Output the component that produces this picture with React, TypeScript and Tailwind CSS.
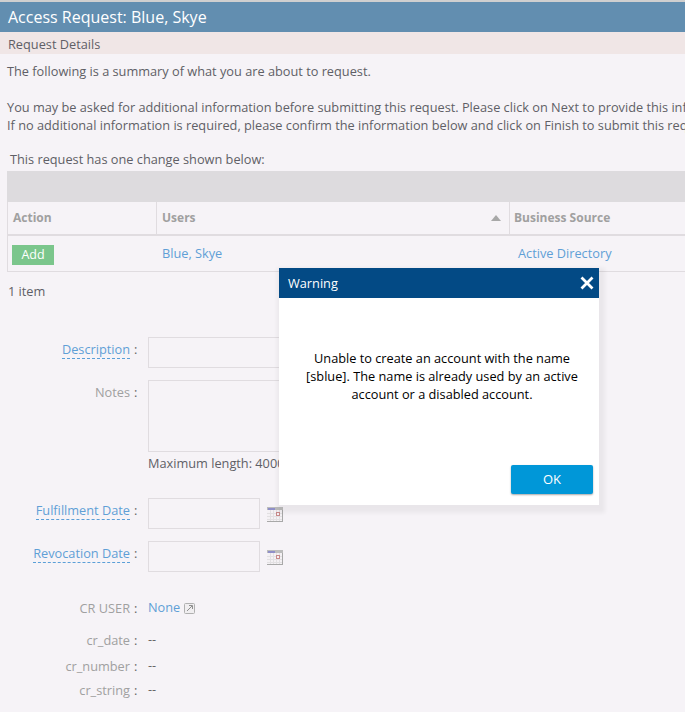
import { useState } from "react";

const font = { fontFamily: '"Open Sans", sans-serif' };

function CalendarIcon() {
  return (
    <svg width="16" height="15" viewBox="0 0 16 15" className="shrink-0" shapeRendering="crispEdges">
      <rect x="0" y="0" width="16" height="15" fill="#a8a8a8" />
      <rect x="0" y="0" width="16" height="3" fill="#bcbcbc" />
      <rect x="1" y="1" width="7" height="2" fill="#8f8fc8" />
      <rect x="0" y="3" width="15" height="11" fill="#f4f1f4" />
      <path d="M0 6.500h15M0 9.500h15M0 12.500h15M3.500 3v11M6.500 3v11M9.500 3v11M12.500 3v11" stroke="#e2e0e2" strokeWidth="1" fill="none" />
      <rect x="9.500" y="5.500" width="3" height="3" fill="#f4f1f4" stroke="#c88a8a" strokeWidth="1" />
    </svg>
  );
}

function ExternalIcon() {
  return (
    <svg width="11" height="11" viewBox="0 0 11 11" fill="none" className="ml-[4px] mt-[5px]">
      <rect x="0.500" y="0.500" width="10" height="10" rx="1" fill="#f0eef0" stroke="#b0b0b0" />
      <path d="M3 8 8 3M5 2.500h3.500V6" stroke="#8f8f8f" strokeWidth="1" />
    </svg>
  );
}

function FieldLabel({ text, help }: { text: string; help?: boolean }) {
  return (
    <div className="flex w-[137px] shrink-0 justify-end whitespace-nowrap pt-[3px] leading-[18px]">
      {help ? (
        <span className="border-b border-dashed border-[#5a9fd8] text-[#5f9fd6]">{text}</span>
      ) : (
        <span className="text-[#a0a0a0]">{text}</span>
      )}
      <span className="ml-[4px] w-[3px] text-[#666]">:</span>
    </div>
  );
}

function DateRow({ text }: { text: string }) {
  return (
    <div className="flex items-start">
      <FieldLabel text={text} help />
      <div className="ml-[11px] h-[31px] w-[112px] border border-[#e0dce0]" />
      <div className="ml-[7px] mt-[9px]">
        <CalendarIcon />
      </div>
    </div>
  );
}

function ValueRow({ text, className }: { text: string; className: string }) {
  return (
    <div className={`flex items-start ${className}`}>
      <FieldLabel text={text} />
      <span className="ml-[11px] pt-[2px] leading-[18px] text-[#666]">--</span>
    </div>
  );
}

export default function App() {
  const [open, setOpen] = useState(true);

  return (
    <div className="relative h-[712px] w-[685px] overflow-hidden bg-[#f6f3f7] text-[12.750px] text-[#5f5f66]" style={font}>
      <div className="h-[2px] bg-[#cfcfcf]" />
      <div className="flex h-[30px] items-center bg-[#628eb0] pl-[8px] text-[16px] text-white">Access Request: Blue, Skye</div>
      <div className="flex h-[22px] items-center bg-[#f0e6e6] pl-[8px] pt-[3px] text-[12.750px]">Request Details</div>

      <div className="whitespace-nowrap pl-[7px] leading-[18px]">
        <p className="mt-[8px]">The following is a summary of what you are about to request.</p>
        <p className="mt-[18px]">You may be asked for additional information before submitting this request. Please click on Next to provide this information.</p>
        <p>If no additional information is required, please confirm the information below and click on Finish to submit this request.</p>
        <p className="mt-[16px] pl-[3px]">This request has one change shown below:</p>
      </div>

      <div className="ml-[7px] mt-[3px] border-b border-[#e0dce0]">
        <div className="h-[31px] bg-[#dddbde]" />
        <div className="flex h-[34px] items-center border-b-2 border-[#e0dce0] text-[12px] font-bold text-[#a0a0a0]">
          <div className="flex h-full w-[150px] items-center border-l border-r border-[#e0dce0] pl-[5px]">Action</div>
          <div className="flex h-full w-[353px] items-center justify-between border-r border-[#e0dce0] pl-[5px] pr-[8px]">
            <span>Users</span>
            <span className="h-0 w-0 border-x-[5px] border-b-[6px] border-x-transparent border-b-[#a8a8a8]" />
          </div>
          <div className="pl-[4px]">Business Source</div>
        </div>
        <div className="flex h-[35px] items-center border-l border-[#e0dce0]">
          <div className="w-[150px] pl-[4px] pt-[2px]">
            <span className="flex h-[20px] w-[42px] items-center justify-center bg-[#7bc68c] pt-[1px] text-[12.500px] text-white">Add</span>
          </div>
          <div className="w-[356px] pl-[4px] text-[#5f9fd6]">Blue, Skye</div>
          <div className="pl-[4px] text-[#5f9fd6]">Active Directory</div>
        </div>
      </div>

      <div className="mt-[10px] pl-[8px] leading-[18px]">1 item</div>

      <div className="mt-[37px]">
        <div className="flex items-start">
          <FieldLabel text="Description" help />
          <div className="ml-[11px] h-[31px] w-[300px] border border-[#e0dce0]" />
        </div>
        <div className="mt-[12px] flex items-start">
          <FieldLabel text="Notes" />
          <div className="ml-[11px]">
            <div className="h-[72px] w-[300px] border border-[#e0dce0]" />
            <p className="mt-[2px] whitespace-nowrap leading-[18px]">Maximum length: 4000</p>
          </div>
        </div>
        <div className="mt-[26px]">
          <DateRow text="Fulfillment Date" />
        </div>
        <div className="mt-[12px]">
          <DateRow text="Revocation Date" />
        </div>
        <div className="mt-[24px] flex items-start">
          <FieldLabel text="CR USER" />
          <span className="ml-[11px] flex items-start pt-[2px] leading-[18px] text-[#5f9fd6]">
            None
            <ExternalIcon />
          </span>
        </div>
        <ValueRow text="cr_date" className="mt-[11px]" />
        <ValueRow text="cr_number" className="mt-[5px]" />
        <ValueRow text="cr_string" className="mt-[3px]" />
      </div>

      {open && (
        <div className="absolute left-[279px] top-[268px] flex h-[237px] w-[320px] flex-col bg-white text-black shadow-[2px_4px_4px_4px_rgba(0,0,0,0.05)]">
          <div className="flex h-[30px] items-center justify-between bg-[#034a85] pl-[9px] pr-[5px] pt-[1px] text-white">
            <span>Warning</span>
            <button type="button" aria-label="Close" onClick={() => setOpen(false)}>
              <svg width="14" height="14" viewBox="0 0 14 14" stroke="white" strokeWidth="2.800" className="block -translate-y-[1px]">
                <path d="M1.500 1.500l11 11M12.500 1.500l-11 11" />
              </svg>
            </button>
          </div>
          <p className="mt-[51px] pl-[25px] pr-[19px] text-center leading-[18px]">
            Unable to create an account with the name [sblue]. The name is already used by an active account or a disabled account.
          </p>
          <div className="mt-auto flex justify-end pb-[11px] pr-[6px]">
            <button type="button" className="h-[29px] w-[82px] rounded-[2px] bg-[#0097d8] text-[13px] text-white shadow-[0_1px_2px_rgba(0,0,0,0.35)]">
              OK
            </button>
          </div>
        </div>
      )}
    </div>
  );
}
